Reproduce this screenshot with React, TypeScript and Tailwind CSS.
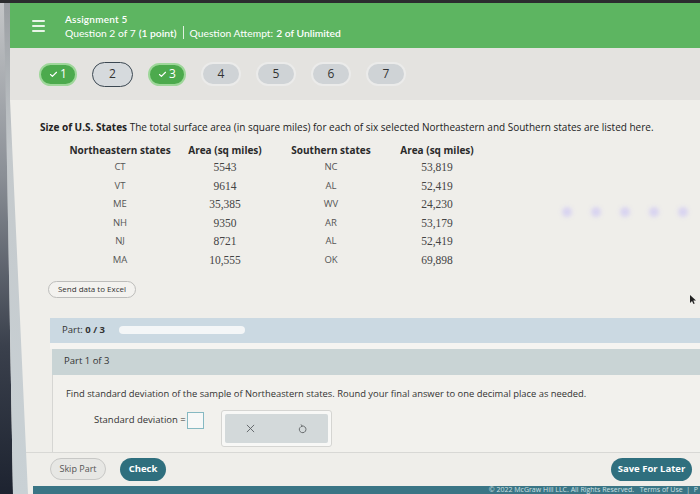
import { Check } from 'lucide-react';

const rows = [
  ['CT', '5543', 'NC', '53,819'],
  ['VT', '9614', 'AL', '52,419'],
  ['ME', '35,385', 'WV', '24,230'],
  ['NH', '9350', 'AR', '53,179'],
  ['NJ', '8721', 'AL', '52,419'],
  ['MA', '10,555', 'OK', '69,898'],
];

const steps = [
  { n: 1, state: 'done' },
  { n: 2, state: 'current' },
  { n: 3, state: 'done' },
  { n: 4, state: 'todo' },
  { n: 5, state: 'todo' },
  { n: 6, state: 'todo' },
  { n: 7, state: 'todo' },
];

function StepPill({ n, state }: { n: number; state: string }) {
  if (state === 'done') {
    return (
      <div className="flex h-[23px] w-[38px] items-center justify-center gap-[2px] rounded-full border-2 border-[#9ed79a] bg-[#4caa4d] text-[12px] text-white">
        <Check className="h-[9px] w-[9px]" strokeWidth={3} />
        <span>{n}</span>
      </div>
    );
  }
  if (state === 'current') {
    return (
      <div className="flex h-[25px] w-[41px] items-center justify-center rounded-full border-[1.5px] border-[#3c4852] bg-[#d6dadd] text-[12px] text-[#333]">
        {n}
      </div>
    );
  }
  return (
    <div className="flex h-[24px] w-[40px] items-center justify-center rounded-full border-2 border-[#ebebea] bg-[#cfd3d6] text-[12px] text-[#333]">
      {n}
    </div>
  );
}

export default function App() {
  return (
    <div className="relative h-[494px] w-[700px] overflow-hidden bg-[#2a2e37] font-['Open_Sans',sans-serif]">
      <div className="h-[3px] bg-[#2b2c2e]" />
      <div className="flex h-[491px]">
        <div className="w-[10px] shrink-0 bg-[#a9acaf]" />
        <div className="flex min-w-0 flex-1 flex-col bg-[#efeeea]">
          {/* top bar */}
          <header className="flex h-[45px] shrink-0 items-center bg-[#5db561] text-white">
            <div className="ml-[22px] flex w-[13px] flex-col gap-[3px]">
              <span className="h-[2px] rounded bg-[#e8f5e8]" />
              <span className="h-[2px] rounded bg-[#e8f5e8]" />
              <span className="h-[2px] rounded bg-[#e8f5e8]" />
            </div>
            <div className="ml-[20px] font-['Lato',sans-serif] leading-[14px]">
              <div className="text-[10px] font-semibold tracking-[0.2px]">Assignment 5</div>
              <div className="flex items-center text-[10.3px]">
                <span>Question 2 of 7</span>
                <span className="ml-[3px] font-semibold">(1 point)</span>
                <span className="mx-[6px] h-[13px] w-px bg-white/80" />
                <span>Question Attempt:</span>
                <span className="ml-[3px] font-semibold">2 of Unlimited</span>
              </div>
            </div>
          </header>

          {/* question steps */}
          <nav className="flex h-[52px] shrink-0 items-center gap-[15px] bg-[#e4e3e0] pl-[29px]">
            {steps.map((s) => (
              <StepPill key={s.n} n={s.n} state={s.state} />
            ))}
          </nav>

          <main className="flex flex-1 flex-col">
            <p className="ml-[30px] mt-[20px] whitespace-nowrap text-[10px] leading-[14px] text-[#222]">
              <b>Size of U.S. States</b> The total surface area (in square miles) for each of six selected Northeastern
              and Southern states are listed here.
            </p>

            <div className="ml-[56px] mt-[8px] grid w-[422px] grid-cols-[108px_102px_110px_102px] text-center">
              <div className="h-[16px] text-[10px] font-bold leading-[16px] text-[#2a2a2a]">Northeastern states</div>
              <div className="h-[16px] text-[10px] font-bold leading-[16px] text-[#2a2a2a]">Area (sq miles)</div>
              <div className="h-[16px] text-[10px] font-bold leading-[16px] text-[#2a2a2a]">Southern states</div>
              <div className="h-[16px] text-[10px] font-bold leading-[16px] text-[#2a2a2a]">Area (sq miles)</div>
              {rows.map((r, i) => (
                <div key={i} className="contents">
                  <div className="h-[18.6px] text-[9.5px] leading-[18.6px] text-[#555]">{r[0]}</div>
                  <div className="h-[18.6px] font-['Liberation_Serif',serif] text-[11.5px] leading-[18.6px] text-[#444]">{r[1]}</div>
                  <div className="h-[18.6px] text-[9.5px] leading-[18.6px] text-[#555]">{r[2]}</div>
                  <div className="h-[18.6px] font-['Liberation_Serif',serif] text-[11.5px] leading-[18.6px] text-[#444]">{r[3]}</div>
                </div>
              ))}
            </div>

            <div className="ml-[38px] mt-[11px] flex h-[17px] w-[88px] items-center justify-center rounded-full border border-[#bdbdbb] bg-[#f3f2ef] text-[8px] text-[#333]">
              Send data to Excel
            </div>

            {/* progress */}
            <div className="ml-[40px] mt-[20px] flex h-[25px] shrink-0 items-center bg-[#cbd9e2] pl-[12px] text-[9.5px] text-[#333]">
              <span>
                Part: <b>0 / 3</b>
              </span>
              <div className="ml-[14px] h-[8px] w-[126px] rounded-sm bg-[#f4f6f7]" />
            </div>
            <div className="ml-[40px] h-[6px] bg-[#f5f4f1]" />
            <div className="ml-[42px] flex h-[26px] shrink-0 items-center bg-[#c9d4d5] pl-[12px] text-[9.5px] text-[#333]">
              Part 1 of 3
            </div>
            <div className="ml-[42px] h-[77px] shrink-0 border-l border-[#d6d6d3] bg-[#f2f1ed] pl-[13px]">
              <p className="mt-[12px] whitespace-nowrap text-[9.4px] leading-[14px] text-[#333]">
                Find standard deviation of the sample of Northeastern states. Round your final answer to one decimal
                place as needed.
              </p>
              <div className="mt-[9px] flex items-start">
                <div className="ml-[28px] mt-[2px] flex items-center text-[9.5px] text-[#333]">
                  <span>Standard deviation =</span>
                  <span className="ml-[1px] h-[17px] w-[17px] border border-[#86b9c2] bg-[#f7f8f7]" />
                </div>
                <div className="ml-[17px] rounded-[3px] border border-[#d5d5d2] bg-[#f8f8f6] p-[3px]">
                  <div className="flex h-[29px] w-[103px] items-center justify-around rounded-[2px] bg-[#d3d9da] text-[#555]">
                    <svg width="9" height="9" viewBox="0 0 10 10" fill="none" stroke="#5a5f63" strokeWidth="1">
                      <path d="M1 1l8 8M9 1L1 9" />
                    </svg>
                    <svg width="10" height="11" viewBox="0 0 12 13" fill="none" stroke="#6a6e70" strokeWidth="1.2">
                      <path d="M3.5 5.2a4 4 0 1 0 2.5-1.6" />
                      <path d="M4.8 1.6L6.2 3.6L4.2 4.9" />
                    </svg>
                  </div>
                </div>
              </div>
            </div>
            <div className="h-px bg-[#d8d8d5]" />

            {/* actions */}
            <div className="flex h-[33px] shrink-0 items-center justify-between pl-[40px] pr-[8px]">
              <div className="flex items-center gap-[14px]">
                <div className="flex h-[22px] w-[56px] items-center justify-center rounded-full border border-[#c8c8c6] bg-[#e7e7e4] text-[9px] text-[#555]">
                  Skip Part
                </div>
                <div className="flex h-[23px] w-[46px] items-center justify-center rounded-full bg-[#2f6f7e] text-[9.5px] font-bold text-white">
                  Check
                </div>
              </div>
              <div className="flex h-[23px] w-[81px] items-center justify-center rounded-full bg-[#2f6f7e] text-[9.5px] font-bold text-white">
                Save For Later
              </div>
            </div>

            <footer className="ml-[23px] flex h-[8px] shrink-0 items-center justify-end overflow-hidden bg-[#3a7585] pr-[2px]">
              <span className="whitespace-nowrap text-[7px] leading-[8px] text-[#cfe0e4]">
                © 2022 McGraw Hill LLC. All Rights Reserved. &nbsp; Terms of Use &nbsp;| &nbsp;P
              </span>
            </footer>
          </main>
        </div>
      </div>

      {/* monitor edge along the left */}
      <svg className="absolute left-0 top-0" width="32" height="494" viewBox="0 0 32 494">
        <defs>
          <linearGradient id="bezel" x1="0" y1="0" x2="0" y2="1">
            <stop offset="0" stopColor="#c4c6c8" />
            <stop offset="0.35" stopColor="#8a8f96" />
            <stop offset="0.7" stopColor="#3a404c" />
            <stop offset="1" stopColor="#1d2330" />
          </linearGradient>
          <linearGradient id="edge" x1="0" y1="0" x2="0" y2="1">
            <stop offset="0" stopColor="#9a9ea2" />
            <stop offset="0.3" stopColor="#c4c9cc" />
            <stop offset="1" stopColor="#c9d1d5" />
          </linearGradient>
        </defs>
        <polygon points="0,3 4,3 13,494 0,494" fill="url(#bezel)" />
        <polygon points="4,3 10,3 10,100 28,494 13,494" fill="url(#edge)" />
      </svg>

      {/* screen glare and pointer */}
      <div className="pointer-events-none absolute left-[562px] top-[207px] flex gap-[19px]">
        {[0, 1, 2, 3, 4].map((i) => (
          <span key={i} className="h-[10px] w-[10px] rounded-full bg-[#c9c2f5] opacity-60 blur-[2px]" />
        ))}
      </div>
      <svg className="absolute left-[690px] top-[295px]" width="7" height="10" viewBox="0 0 7 10">
        <path d="M0 0v8l2-2 1.5 3 1.2-.6L3.3 5.6H6z" fill="#222" />
      </svg>
    </div>
  );
}
